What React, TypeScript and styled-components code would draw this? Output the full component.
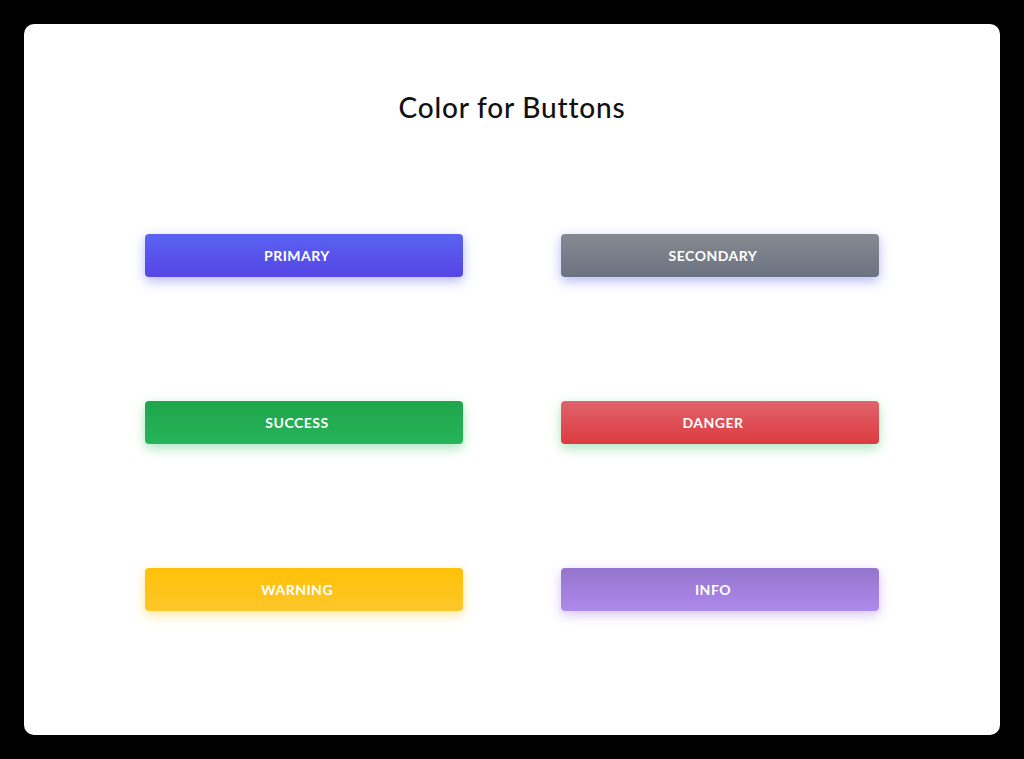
import React, { FC } from 'react';
import styled, { createGlobalStyle } from 'styled-components';

const GlobalStyle = createGlobalStyle`
  html, body {
    margin: 0;
    padding: 0;
    background: #000;
  }
  body {
    font-family: Lato, 'Open Sans', sans-serif;
  }
`;

const Card = styled.div`
  box-sizing: border-box;
  margin: 24px;
  height: 711px;
  background: #fff;
  border-radius: 10px;
  padding-top: 66px;
  display: flex;
  flex-direction: column;
  align-items: center;
`;

const Title = styled.h1`
  margin: 0;
  font-family: Lato, sans-serif;
  font-weight: 500;
  font-size: 28px;
  line-height: 34px;
  color: #111;
  letter-spacing: 0.8px;
`;

const Grid = styled.div`
  margin-top: 110px;
  display: grid;
  grid-template-columns: 318px 318px;
  column-gap: 98px;
  row-gap: 124px;
`;

type TButton = {
  top: string;
  bottom: string;
  glow: string;
};

const Button = styled.button<TButton>`
  height: 43px;
  padding: 0 14px 0 0;
  border: 0;
  border-radius: 4px;
  background: linear-gradient(
    to bottom,
    ${(props) => props.top},
    ${(props) => props.bottom}
  );
  box-shadow: 0 4px 12px ${(props) => props.glow};
  color: #fff;
  font-family: Lato, sans-serif;
  font-weight: 700;
  font-size: 14px;
  letter-spacing: 0.5px;
  text-transform: uppercase;
  cursor: pointer;
`;

const buttons = [
  { label: 'Primary', top: '#5b63f2', bottom: '#5545e5', glow: 'rgba(90, 95, 240, 0.45)' },
  { label: 'Secondary', top: '#878a91', bottom: '#6b7280', glow: 'rgba(90, 95, 240, 0.45)' },
  { label: 'Success', top: '#1fa54a', bottom: '#27b45b', glow: 'rgba(40, 190, 90, 0.4)' },
  { label: 'Danger', top: '#e1636b', bottom: '#dc3b40', glow: 'rgba(40, 190, 90, 0.4)' },
  { label: 'Warning', top: '#ffc107', bottom: '#fdc62b', glow: 'rgba(255, 200, 30, 0.45)' },
  { label: 'Info', top: '#9474cc', bottom: '#ae8aec', glow: 'rgba(150, 110, 220, 0.4)' },
];

const App: FC = () => {
  return (
    <>
      <GlobalStyle />
      <Card>
        <Title>Color for Buttons</Title>
        <Grid>
          {buttons.map((b) => (
            <Button key={b.label} top={b.top} bottom={b.bottom} glow={b.glow}>
              {b.label}
            </Button>
          ))}
        </Grid>
      </Card>
    </>
  );
};

export default App;
